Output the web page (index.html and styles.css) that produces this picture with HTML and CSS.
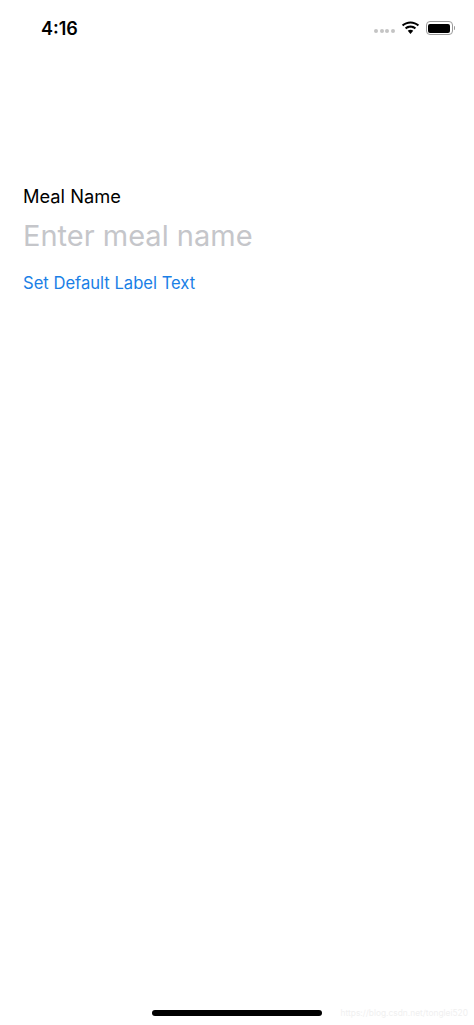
FILE: index.html
```html
<!DOCTYPE html>
<html lang="en">
<head>
    <meta charset="UTF-8">
    <meta name="viewport" content="width=device-width, initial-scale=1.0">
    <title>Meal Name</title>
    <link rel="stylesheet" href="styles.css">
</head>
<body>
<main class="phone-screen">
    <!-- Status bar -->
    <div class="status-bar">
        <span class="status-time">4:16</span>
        <div class="status-icons">
            <div class="signal-dots">
                <span class="signal-dot"></span>
                <span class="signal-dot"></span>
                <span class="signal-dot"></span>
                <span class="signal-dot"></span>
            </div>
            <svg class="wifi-icon" width="19" height="14" viewBox="0 0 18 14" preserveAspectRatio="none">
                <path d="M9 2.6c2.6 0 5 1 6.8 2.7l1.4-1.5C15 1.7 12.1.4 9 .4S3 1.7.8 3.8l1.4 1.5C4 3.6 6.4 2.6 9 2.6z" fill="#000"/>
                <path d="M9 6.8c1.4 0 2.8.5 3.9 1.5l1.4-1.6C12.8 5.4 11 4.6 9 4.6s-3.8.8-5.3 2.1l1.4 1.6C6.2 7.3 7.6 6.8 9 6.8z" fill="#000"/>
                <path d="M9 8.8c-1 0-1.9.4-2.6 1L9 13l2.6-3.2c-.7-.6-1.6-1-2.6-1z" fill="#000"/>
            </svg>
            <div class="battery">
                <div class="battery-body">
                    <div class="battery-fill"></div>
                </div>
                <span class="battery-cap"></span>
            </div>
        </div>
    </div>

    <!-- Meal form -->
    <section class="meal-form">
        <label class="meal-label">Meal Name</label>
        <input class="meal-input" type="text" placeholder="Enter meal name">
        <button class="default-button">Set Default Label Text</button>
    </section>

    <!-- Home indicator -->
    <footer class="bottom-area">
        <div class="home-indicator"></div>
        <span class="watermark">https://blog.csdn.net/tonglei520</span>
    </footer>
</main>
</body>
</html>
```

FILE: styles.css
```css
body {
    margin: 0;
    background-color: #fff;
    font-family: "Inter", "Liberation Sans", sans-serif;
}

.phone-screen {
    display: flex;
    flex-direction: column;
    height: 1025px;
    overflow: hidden;
}

/* Status bar */
.status-bar {
    display: flex;
    justify-content: space-between;
    align-items: center;
    height: 28px;
    padding: 14px 19px 0 41px;
}

.status-time {
    font-size: 18px;
    font-weight: 600;
    color: #000;
}

.status-icons {
    display: flex;
    align-items: center;
}

.signal-dots {
    display: flex;
    gap: 1.5px;
    margin-right: 6px;
    margin-top: 5px;
}

.signal-dot {
    width: 4px;
    height: 4px;
    border-radius: 50%;
    background-color: #c4c4c4;
}

.wifi-icon {
    margin-right: 6px;
}

.battery {
    display: flex;
    align-items: center;
}

.battery-body {
    box-sizing: border-box;
    width: 27px;
    height: 14px;
    padding: 1.5px;
    border: 1px solid #9a9a9a;
    border-radius: 4px;
}

.battery-fill {
    height: 100%;
    background-color: #000;
    border-radius: 2px;
}

.battery-cap {
    width: 1.5px;
    height: 4px;
    margin-left: 1px;
    background-color: #9a9a9a;
    border-radius: 0 1px 1px 0;
}

/* Meal form */
.meal-form {
    display: flex;
    flex-direction: column;
    align-items: flex-start;
    flex: 1;
    padding: 142px 23px 0;
}

.meal-label {
    font-size: 18.3px;
    line-height: 24px;
    color: #000;
}

.meal-input {
    width: 420px;
    height: 36px;
    margin-top: 10px;
    padding: 0;
    border: none;
    outline: none;
    font-family: inherit;
    font-size: 29px;
    line-height: 36px;
}

.meal-input::placeholder {
    color: #c5c6ca;
    opacity: 1;
}

.default-button {
    margin-top: 18px;
    padding: 0;
    border: none;
    background: none;
    font-family: inherit;
    font-size: 16.6px;
    line-height: 22px;
    color: #1a7fe6;
}

/* Home indicator */
.bottom-area {
    position: relative;
    box-sizing: border-box;
    height: 20px;
    padding-top: 5px;
    flex-shrink: 0;
}

.home-indicator {
    width: 170px;
    height: 6px;
    margin-left: 152px;
    background-color: #000;
    border-radius: 3px;
}

.watermark {
    position: absolute;
    right: 6px;
    top: 2px;
    font-size: 8.4px;
    line-height: 12px;
    color: #f0f0f0;
}
```
